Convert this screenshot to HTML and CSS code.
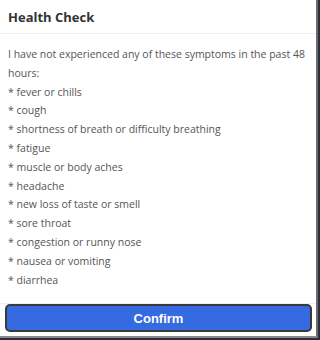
FILE: index.html
```html
<!DOCTYPE html>
<html>
<head>
<meta charset="utf-8">
<link rel="stylesheet" href="styles.css">
</head>
<body>
<div class="panel">
  <div class="header">Health Check</div>
  <div class="body">
    <p>I have not experienced any of these symptoms in the past 48 hours:</p>
    <p>* fever or chills</p>
    <p>* cough</p>
    <p>* shortness of breath or difficulty breathing</p>
    <p>* fatigue</p>
    <p>* muscle or body aches</p>
    <p>* headache</p>
    <p>* new loss of taste or smell</p>
    <p>* sore throat</p>
    <p>* congestion or runny nose</p>
    <p>* nausea or vomiting</p>
    <p>* diarrhea</p>
  </div>
  <div class="footer">
    <button class="confirm">Confirm</button>
  </div>
</div>
</body>
</html>
```
FILE: styles.css
```css
html, body {
  margin: 0;
  padding: 0;
  background: #2a2f3a;
}
.panel {
  width: 318px;
  height: 338px;
  background: #fff;
  border-right: 2px solid #6d6d6d;
  border-bottom: 2px solid #8a8a8a;
  box-sizing: border-box;
  display: flex;
  flex-direction: column;
  font-family: "Open Sans", "Noto Sans", sans-serif;
}
.header {
  height: 34px;
  box-sizing: border-box;
  border-bottom: 1px solid #eeeefa;
  padding: 7px 8px 0;
  font-size: 13px;
  font-weight: 700;
  color: #333;
  line-height: 20px;
}
.body {
  padding: 11px 8px 0;
  color: #555;
  font-size: 10.5px;
  line-height: 18.8px;
  flex: 1;
}
.body p {
  margin: 0;
}
.footer {
  border-top: 1px solid #f0f0f8;
  padding: 0 4px 4px 5px;
}
.confirm {
  display: block;
  width: 100%;
  height: 28px;
  border: 2px solid #3a3a3a;
  border-radius: 5px;
  background: #356ae0;
  color: #fff;
  font-family: "Liberation Sans", Arial, sans-serif;
  font-weight: 700;
  font-size: 13px;
  padding: 0;
}
```
